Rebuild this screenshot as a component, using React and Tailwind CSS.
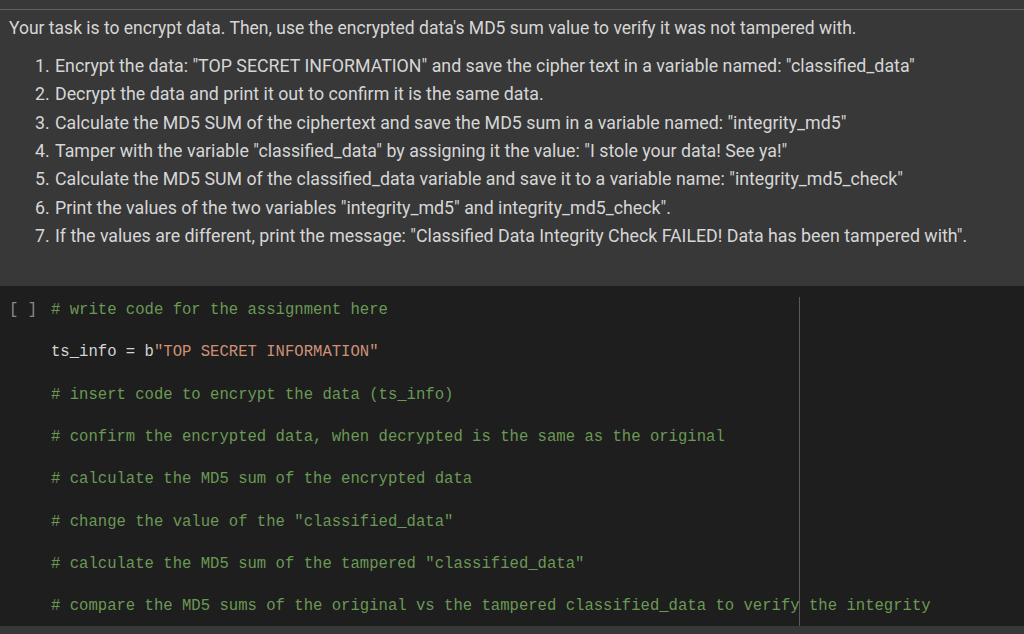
import React from "react";

const steps = [
  'Encrypt the data: "TOP SECRET INFORMATION" and save the cipher text in a variable named: "classified_data"',
  "Decrypt the data and print it out to confirm it is the same data.",
  'Calculate the MD5 SUM of the ciphertext and save the MD5 sum in a variable named: "integrity_md5"',
  'Tamper with the variable "classified_data" by assigning it the value: "I stole your data! See ya!"',
  'Calculate the MD5 SUM of the classified_data variable and save it to a variable name: "integrity_md5_check"',
  'Print the values of the two variables "integrity_md5" and integrity_md5_check".',
  'If the values are different, print the message: "Classified Data Integrity Check FAILED! Data has been tampered with".',
];

const comments = [
  "# insert code to encrypt the data (ts_info)",
  "# confirm the encrypted data, when decrypted is the same as the original",
  "# calculate the MD5 sum of the encrypted data",
  '# change the value of the "classified_data"',
  '# calculate the MD5 sum of the tampered "classified_data"',
  "# compare the MD5 sums of the original vs the tampered classified_data to verify the integrity",
];

const App = () => {
  return (
    <div className="w-[1024px] h-[634px] overflow-hidden bg-[#383838] flex flex-col">
      {/* Markdown cell */}
      <div className="pt-[9px] h-[286px] shrink-0">
        <div className="h-px bg-[#5f5f5f]" />
        <div className="px-[9px] pt-[6px] font-['Roboto',sans-serif] text-[17.5px] text-[#d6d6d6]">
          <p className="leading-[24px]">
            Your task is to encrypt data. Then, use the encrypted data's MD5 sum value to verify it was not tampered with.
          </p>
          <ol className="mt-[12px] pl-[26px] text-[17.8px]">
            {steps.map((s, i) => (
              <li key={i} className="leading-[28.35px] flex">
                <span className="w-[20px] shrink-0">{i + 1}.</span>
                <span>{s}</span>
              </li>
            ))}
          </ol>
        </div>
      </div>

      {/* Code cell */}
      <div className="flex-1 bg-[#1e1e1e] relative font-['Liberation_Mono',monospace] text-[15.6px] leading-[21.15px] pt-[14px]">
        <div className="absolute left-[799px] top-[11px] bottom-0 w-px bg-[#5a5a5a]" />
        <div className="flex">
          <div className="w-[51px] shrink-0 pl-[9px] text-[#8a8a8a] whitespace-pre">[ ]</div>
          <div className="text-[#6a9955] whitespace-pre">
            <div># write code for the assignment here</div>
            <div>&nbsp;</div>
            <div className="text-[#d4d4d4]">
              ts_info = b<span className="text-[#ce9178]">"TOP SECRET INFORMATION"</span>
            </div>
            {comments.map((c, i) => (
              <React.Fragment key={i}>
                <div>&nbsp;</div>
                <div>{c}</div>
              </React.Fragment>
            ))}
          </div>
        </div>
      </div>
      <div className="h-[8px] shrink-0 bg-[#383838]" />
    </div>
  );
};

export default App;
